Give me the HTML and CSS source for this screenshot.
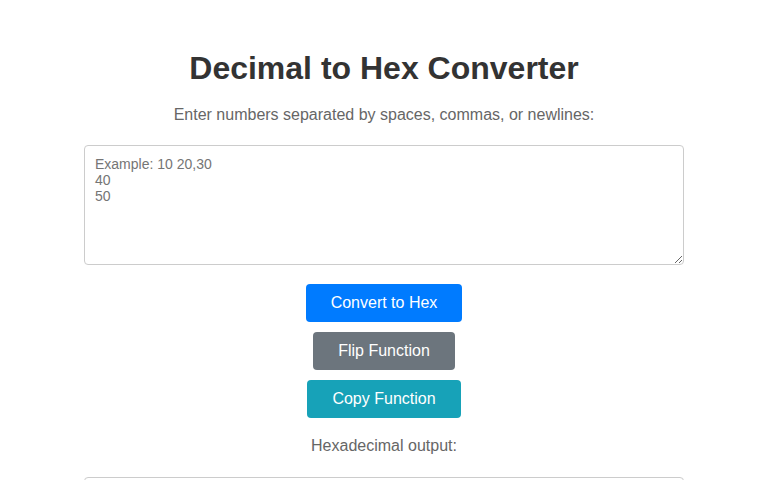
FILE: index.html
```html
<!DOCTYPE html>
<html lang="en">
<head>
    <meta charset="UTF-8">
    <meta name="viewport" content="width=device-width, initial-scale=1.0">
    <title>Decimal to Hex Converter</title>
    <link rel="stylesheet" href="styles.css">
</head>
<body>
    <div class="container">
        <h1 class="title">Decimal to Hex Converter</h1>
        <p class="label">Enter numbers separated by spaces, commas, or newlines:</p>
        <textarea id="input" class="box" placeholder="Example: 10 20,30&#10;40&#10;50"></textarea>

        <div class="actions">
            <button class="btn btn-blue" onclick="convert()">Convert to Hex</button>
            <button class="btn btn-grey" onclick="flip()">Flip Function</button>
            <button class="btn btn-teal" onclick="copyOut()">Copy Function</button>
        </div>

        <p class="label label-out">Hexadecimal output:</p>
        <textarea id="output" class="box box-out" readonly></textarea>
    </div>

    <script>
    let toHex = true;

    function convert() {
        const raw = document.getElementById('input').value;
        const parts = raw.split(/[\s,]+/).filter(s => s.length);
        const out = parts.map(p => {
            if (toHex) {
                const n = parseInt(p, 10);
                return isNaN(n) ? 'NaN' : n.toString(16).toUpperCase();
            }
            const n = parseInt(p, 16);
            return isNaN(n) ? 'NaN' : String(n);
        });
        document.getElementById('output').value = out.join(' ');
    }

    function flip() {
        toHex = !toHex;
    }

    function copyOut() {
        const o = document.getElementById('output');
        o.select();
        document.execCommand('copy');
    }
    </script>
</body>
</html>
```

FILE: styles.css
```css
* {
    box-sizing: border-box;
}

body {
    margin: 0;
    font-family: "Liberation Sans", Arial, sans-serif;
    background: #fff;
    color: #666;
}

/* 主体容器 */
.container {
    width: 600px;
    margin: 0 auto;
    padding-top: 50px;
    display: flex;
    flex-direction: column;
    align-items: center;
}

.title {
    margin: 0;
    font-size: 32px;
    line-height: 37px;
    color: #333;
}

.label {
    margin: 19px 0 0;
    font-size: 16px;
    line-height: 18px;
    color: #666;
}

.box {
    width: 100%;
    height: 120px;
    margin-top: 21px;
    padding: 10px;
    border: 1px solid #ccc;
    border-radius: 4px;
    font-family: "Liberation Sans", Arial, sans-serif;
    font-size: 14px;
    line-height: 16px;
    color: #333;
    resize: vertical;
}

.box::placeholder {
    color: #757575;
}

.box-out {
    margin-top: 22px;
}

/* 按钮组 */
.actions {
    margin-top: 19px;
    display: flex;
    flex-direction: column;
    align-items: center;
    gap: 10px;
}

.btn {
    padding: 10px 25px;
    border: none;
    border-radius: 4px;
    font-family: "Liberation Sans", Arial, sans-serif;
    font-size: 16px;
    line-height: 18px;
    color: #fff;
    cursor: pointer;
}

.btn-blue {
    background: #007bff;
}

.btn-grey {
    background: #6c757d;
}

.btn-teal {
    background: #17a2b8;
}

.btn:hover {
    opacity: 0.9;
}
```
